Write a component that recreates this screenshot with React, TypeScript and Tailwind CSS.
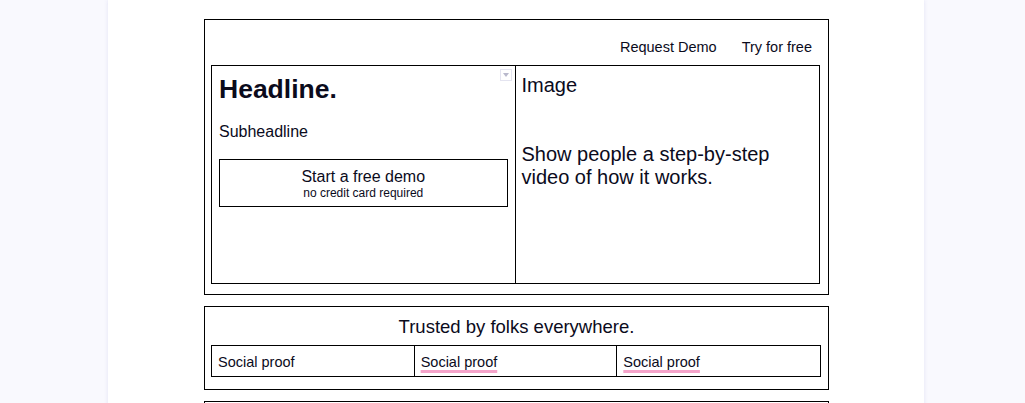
// Landing page wireframe — hero, nav links and social proof strip.

const SOCIAL = [
  { label: "Social proof", flagged: false },
  { label: "Social proof", flagged: true },
  { label: "Social proof", flagged: true },
];

function DropHandle() {
  return (
    <div className="absolute right-[3px] top-[3px] flex h-[12px] w-[12px] items-center justify-center border border-[#e4e4f0] bg-white">
      <svg width="6" height="4" viewBox="0 0 6 4">
        <path d="M0 0h6L3 4z" fill="#b9b9cc" />
      </svg>
    </div>
  );
}

export default function App() {
  return (
    <div
      className="min-h-screen bg-[#f9f9fe] text-[#0b0b1c]"
      style={{ fontFamily: '"Liberation Sans", Arial, sans-serif' }}
    >
      <div className="ml-[108px] min-h-screen w-[816px] bg-white pt-[19px] shadow-[0_0_4px_rgba(120,120,200,0.18)]">
        <div className="ml-[96px] w-[625px]">
          <section className="h-[276px] border border-black">
            <nav className="flex justify-end gap-[25px] pr-[16px] pt-[18px] text-[14.5px] leading-[18px]">
              <a>Request Demo</a>
              <a>Try for free</a>
            </nav>
            <div className="ml-[6px] mt-[9px] grid h-[219px] w-[609px] grid-cols-2 border border-black">
              <div className="relative border-r border-black px-[7px] pt-[8px]">
                <DropHandle />
                <h1 className="text-[26.5px] font-bold leading-[30px]">Headline.</h1>
                <p className="mt-[18px] text-[16px] leading-[19px]">Subheadline</p>
                <button
                  type="button"
                  className="mt-[18px] flex h-[48px] w-full flex-col items-center justify-center border border-black pt-[2px]"
                >
                  <span className="text-[16px] leading-[18px]">Start a free demo</span>
                  <span className="text-[12px] leading-[14px]">no credit card required</span>
                </button>
              </div>
              <div className="px-[6px] pt-[8px] text-[20px] leading-[23px]">
                <p>Image</p>
                <p className="mt-[46px]">
                  Show people a step-by-step
                  <br />
                  video of how it works.
                </p>
              </div>
            </div>
          </section>

          <section className="mt-[11px] h-[84px] border border-black">
            <h2 className="pt-[9px] text-center text-[18.5px] leading-[22px]">
              Trusted by folks everywhere.
            </h2>
            <div className="ml-[6px] mt-[7px] grid h-[32px] w-[610px] grid-cols-3 border border-black">
              {SOCIAL.map((item, i) => (
                <div
                  key={i}
                  className={
                    i < 2
                      ? "flex items-center border-r border-black px-[6px] pt-[3px] text-[14.5px]"
                      : "flex items-center px-[6px] pt-[3px] text-[14.5px]"
                  }
                >
                  <span
                    className={
                      item.flagged
                        ? "underline decoration-[#f4a3c9] decoration-[3px] underline-offset-[3px]"
                        : ""
                    }
                  >
                    {item.label}
                  </span>
                </div>
              ))}
            </div>
          </section>

          <section className="mt-[11px] h-[120px] border border-black" />
        </div>
      </div>
    </div>
  );
}
